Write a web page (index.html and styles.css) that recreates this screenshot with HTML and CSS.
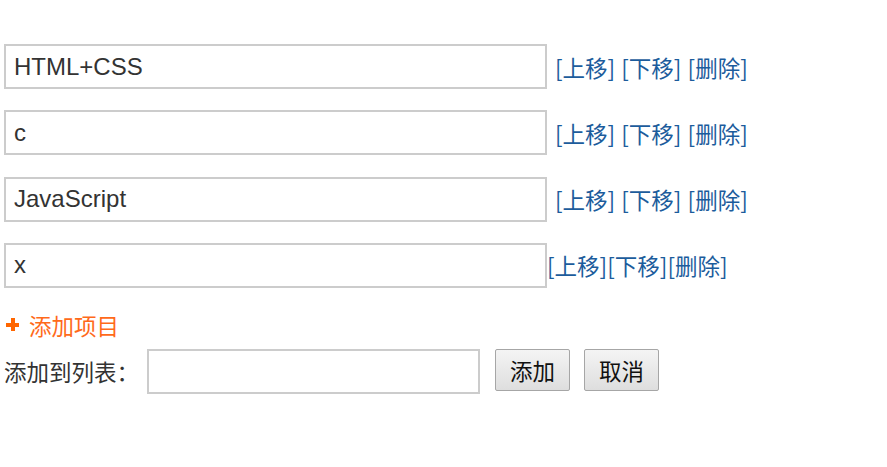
FILE: index.html
```html
<!DOCTYPE html>
<html lang="zh-CN">
<head>
<meta charset="utf-8">
<title>列表</title>
<link rel="stylesheet" href="styles.css">
</head>
<body>
<div class="page">
  <div class="list">
    <div class="item"><input class="field" type="text" value="HTML+CSS"><span class="ops"><a href="#">[上移]</a> <a href="#">[下移]</a> <a href="#">[删除]</a></span></div>
    <div class="item"><input class="field" type="text" value="c"><span class="ops"><a href="#">[上移]</a> <a href="#">[下移]</a> <a href="#">[删除]</a></span></div>
    <div class="item"><input class="field" type="text" value="JavaScript"><span class="ops"><a href="#">[上移]</a> <a href="#">[下移]</a> <a href="#">[删除]</a></span></div>
    <div class="item"><input class="field" type="text" value="x"><span class="ops tight"><a href="#">[上移]</a><a href="#">[下移]</a><a href="#">[删除]</a></span></div>
  </div>
  <div class="add-link"><span class="plus"></span><span>添加项目</span></div>
  <div class="add-row">
    <label class="add-label">添加到列表：</label>
    <input class="add-field" type="text">
    <button class="btn">添加</button>
    <button class="btn">取消</button>
  </div>
</div>
</body>
</html>
```
FILE: styles.css
```css
html, body {
  margin: 0;
  padding: 0;
  background: #fff;
}
body {
  font-family: "Noto Sans CJK SC", "Liberation Sans", sans-serif;
  color: #333;
}
.page {
  padding: 44px 0 0 4px;
}
.list {
  display: flex;
  flex-direction: column;
  gap: 21.3px;
}
.item {
  display: flex;
  align-items: center;
  height: 45px;
}
.field {
  box-sizing: border-box;
  width: 543px;
  height: 45px;
  border: 2px solid #ccc;
  padding: 0 8px;
  margin: 0;
  font-family: "Liberation Sans", Arial, sans-serif;
  font-size: 24px;
  color: #333;
  outline: none;
}
.ops {
  margin-left: 8px;
  font-size: 22.5px;
  white-space: pre;
  word-spacing: 1px;
}
.ops.tight {
  margin-left: 0;
}
.ops a {
  color: #1c5c9c;
  text-decoration: none;
}
.add-link {
  display: flex;
  align-items: center;
  margin-top: 22px;
  height: 30px;
  color: #ff6a1a;
  font-size: 22.5px;
}
.plus {
  position: relative;
  width: 13px;
  height: 13px;
  margin: 0 10px 0 2px;
}
.plus::before, .plus::after {
  content: "";
  position: absolute;
  background: #ff6600;
}
.plus::before {
  left: 0; top: 4.5px; width: 13px; height: 4px;
}
.plus::after {
  left: 4.5px; top: 0; width: 4px; height: 13px;
}
.add-row {
  display: flex;
  align-items: flex-start;
  margin-top: 9px;
}
.add-label {
  font-size: 22.5px;
  line-height: 45px;
  color: #333;
  width: 143px;
  white-space: nowrap;
}
.add-field {
  box-sizing: border-box;
  width: 333px;
  height: 45px;
  border: 2px solid #ccc;
  margin: 0 15px 0 0;
  padding: 0 8px;
  outline: none;
}
.btn {
  box-sizing: border-box;
  height: 42px;
  width: 75px;
  padding: 0;
  margin: 0 14px 0 0;
  border: 1px solid #a6a6a6;
  border-radius: 2px;
  background: linear-gradient(#f4f4f4, #dedede);
  font-family: "Noto Sans CJK SC", sans-serif;
  font-size: 22.5px;
  color: #111;
  line-height: 1;
}
```
